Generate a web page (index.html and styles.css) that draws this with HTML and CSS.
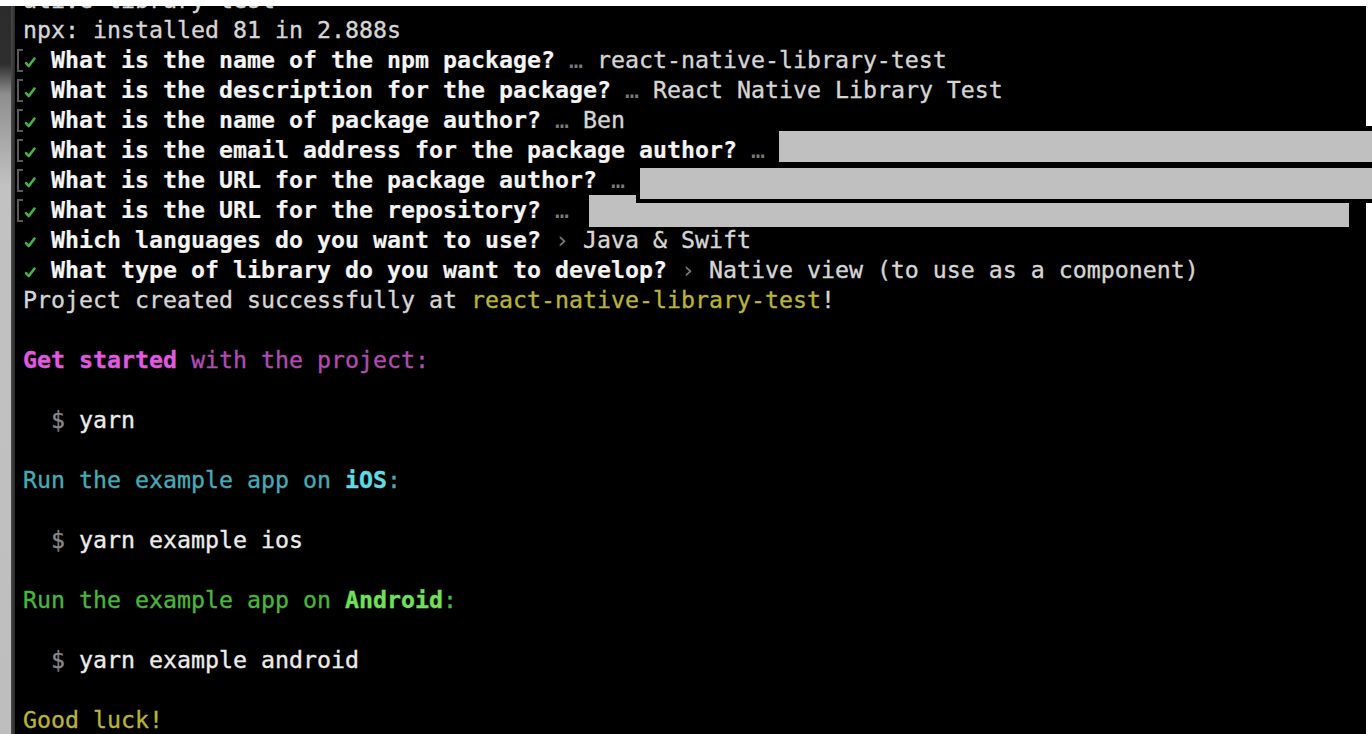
FILE: index.html
```html
<!DOCTYPE html>
<html>
<head>
<meta charset="utf-8">
<link rel="stylesheet" href="styles.css">
</head>
<body>
<div class="window">
  <div class="side"></div>
  <div class="divider"></div>
  <div class="terminal">
    <div class="output">
      <div class="row">ative library test</div>
      <div class="row">npx: installed 81 in 2.888s</div>
      <div class="row"><span class="br"></span><span class="ck"><svg viewBox="0 0 14 14" width="14" height="14"><path d="M3 8.2 L5.8 11 L11.5 3.5" /></svg></span> <b class="q">What is the name of the npm package?</b> <span class="dim">…</span> react-native-library-test</div>
      <div class="row"><span class="br"></span><span class="ck"><svg viewBox="0 0 14 14" width="14" height="14"><path d="M3 8.2 L5.8 11 L11.5 3.5" /></svg></span> <b class="q">What is the description for the package?</b> <span class="dim">…</span> React Native Library Test</div>
      <div class="row"><span class="br"></span><span class="ck"><svg viewBox="0 0 14 14" width="14" height="14"><path d="M3 8.2 L5.8 11 L11.5 3.5" /></svg></span> <b class="q">What is the name of package author?</b> <span class="dim">…</span> Ben</div>
      <div class="row"><span class="br"></span><span class="ck"><svg viewBox="0 0 14 14" width="14" height="14"><path d="M3 8.2 L5.8 11 L11.5 3.5" /></svg></span> <b class="q">What is the email address for the package author?</b> <span class="dim">…</span></div>
      <div class="row"><span class="br"></span><span class="ck"><svg viewBox="0 0 14 14" width="14" height="14"><path d="M3 8.2 L5.8 11 L11.5 3.5" /></svg></span> <b class="q">What is the URL for the package author?</b> <span class="dim">…</span></div>
      <div class="row"><span class="br"></span><span class="ck"><svg viewBox="0 0 14 14" width="14" height="14"><path d="M3 8.2 L5.8 11 L11.5 3.5" /></svg></span> <b class="q">What is the URL for the repository?</b> <span class="dim">…</span></div>
      <div class="row"><span class="ck"><svg viewBox="0 0 14 14" width="14" height="14"><path d="M3 8.2 L5.8 11 L11.5 3.5" /></svg></span> <b class="q">Which languages do you want to use?</b> <span class="dim">›</span> Java &amp; Swift</div>
      <div class="row"><span class="ck"><svg viewBox="0 0 14 14" width="14" height="14"><path d="M3 8.2 L5.8 11 L11.5 3.5" /></svg></span> <b class="q">What type of library do you want to develop?</b> <span class="dim">›</span> Native view (to use as a component)</div>
      <div class="row">Project created successfully at <span class="yellow">react-native-library-test</span>!</div>
      <div class="row"></div>
      <div class="row magenta"><b class="magenta-b">Get started</b> with the project:</div>
      <div class="row"></div>
      <div class="row">  <span class="prompt">$</span> <span class="cmd">yarn</span></div>
      <div class="row"></div>
      <div class="row cyan">Run the example app on <b class="cyan-b">iOS</b>:</div>
      <div class="row"></div>
      <div class="row">  <span class="prompt">$</span> <span class="cmd">yarn example ios</span></div>
      <div class="row"></div>
      <div class="row green">Run the example app on <b class="green-b">Android</b>:</div>
      <div class="row"></div>
      <div class="row">  <span class="prompt">$</span> <span class="cmd">yarn example android</span></div>
      <div class="row"></div>
      <div class="row yellow">Good luck!</div>
    </div>
  </div>
  <div class="edge"></div>

  <div class="redact redact-c"></div>
  <div class="redact-box redact-a"><div class="fill"></div></div>
  <div class="redact-box redact-b"><div class="fill"></div></div>
</div>
</body>
</html>
```

FILE: styles.css
```css
html, body {
  margin: 0;
  padding: 0;
  background: #ffffff;
  overflow: hidden;
}

.window {
  position: relative;
  display: flex;
  width: 1372px;
  height: 734px;
  padding-top: 6px;
  box-sizing: border-box;
}

.side {
  width: 11px;
  flex: none;
  background: linear-gradient(to bottom, #2c2c2c 0px, #2e2e2e 58px, #8e8e8e 88px, #c2c2c2 180px, #bebebe 100%);
}

.divider {
  width: 4px;
  flex: none;
  background: linear-gradient(to right, #4a4a4a, #2a2a2a);
}

.terminal {
  flex: 1;
  background: #000;
  overflow: hidden;
  padding-left: 8px;
}

.edge {
  width: 6px;
  flex: none;
  background: #fff;
}

.output {
  margin-top: -21px;
  font-family: "DejaVu Sans Mono", "Liberation Mono", monospace;
  font-size: 23.25px;
  line-height: 30px;
  color: #d6d6d6;
  -webkit-text-stroke: 0.35px currentColor;
}

.row {
  height: 30px;
  white-space: pre;
}

.q {
  color: #f4f4f4;
  font-weight: bold;
  -webkit-text-stroke: 0.2px currentColor;
}

.dim {
  color: #7a7a7a;
  -webkit-text-stroke: 0;
}

.br {
  display: inline-block;
  width: 4px;
  height: 19px;
  margin-left: -6px;
  margin-right: 0;
  border: 2px solid #5a5a5a;
  border-right: 0;
  box-sizing: content-box;
  vertical-align: -4px;
}

.ck {
  display: inline-block;
  width: 14px;
  height: 14px;
  vertical-align: -1px;
}

.ck svg {
  display: block;
}

.ck path {
  fill: none;
  stroke: #45b545;
  stroke-width: 2.6;
  stroke-linecap: round;
  stroke-linejoin: round;
}

.yellow {
  color: #b8b43a;
}

.magenta {
  color: #b24cb2;
}

.magenta-b {
  color: #e05ae0;
  font-weight: bold;
}

.cyan {
  color: #4aa9b6;
}

.cyan-b {
  color: #60dbe4;
  font-weight: bold;
}

.green {
  color: #4ab63e;
}

.green-b {
  color: #70e05a;
  font-weight: bold;
}

.prompt {
  color: #888888;
}

.cmd {
  color: #ececec;
}

.redact {
  position: absolute;
  background: #c0c0c0;
}

.redact-c {
  left: 589px;
  top: 195px;
  width: 760px;
  height: 32px;
}

.redact-box {
  position: absolute;
  background: #000;
  box-sizing: border-box;
  padding: 5px 0 4px 4px;
}

.redact-box .fill {
  width: 100%;
  height: 100%;
  background: #c0c0c0;
}

.redact-a {
  left: 775px;
  top: 126px;
  width: 597px;
  height: 40px;
}

.redact-b {
  left: 636px;
  top: 163px;
  width: 736px;
  height: 40px;
}
```
